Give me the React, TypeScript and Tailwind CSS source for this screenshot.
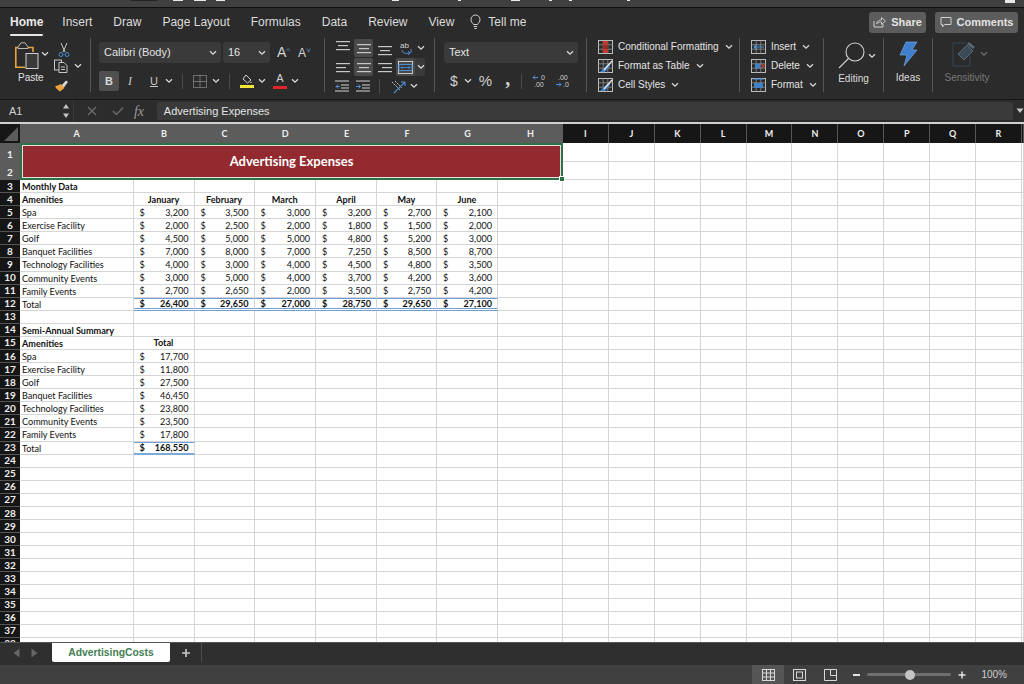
import * as React from "react";

const UI = "font-['Liberation_Sans',Arial,sans-serif]";
const SHEET = "font-['Lato','Noto_Sans',sans-serif]";

const TABS = ["Insert", "Draw", "Page Layout", "Formulas", "Data", "Review", "View"];
const COLS = ["A", "B", "C", "D", "E", "F", "G", "H"];
const DARK_COLS = ["I", "J", "K", "L", "M", "N", "O", "P", "Q", "R", "S"];
const MONTHS = ["January", "February", "March", "April", "May", "June"];

type DataRow = { n: number; label?: string; bold?: boolean; head?: string[]; vals?: string[]; total?: boolean };

const ROWS: DataRow[] = [
  { n: 3, label: "Monthly Data", bold: true },
  { n: 4, label: "Amenities", bold: true, head: MONTHS },
  { n: 5, label: "Spa", vals: ["3,200", "3,500", "3,000", "3,200", "2,700", "2,100"] },
  { n: 6, label: "Exercise Facility", vals: ["2,000", "2,500", "2,000", "1,800", "1,500", "2,000"] },
  { n: 7, label: "Golf", vals: ["4,500", "5,000", "5,000", "4,800", "5,200", "3,000"] },
  { n: 8, label: "Banquet Facilities", vals: ["7,000", "8,000", "7,000", "7,250", "8,500", "8,700"] },
  { n: 9, label: "Technology Facilities", vals: ["4,000", "3,000", "4,000", "4,500", "4,800", "3,500"] },
  { n: 10, label: "Community Events", vals: ["3,000", "5,000", "4,000", "3,700", "4,200", "3,600"] },
  { n: 11, label: "Family Events", vals: ["2,700", "2,650", "2,000", "3,500", "2,750", "4,200"] },
  { n: 12, label: "Total", vals: ["26,400", "29,650", "27,000", "28,750", "29,650", "27,100"], total: true },
  { n: 13 },
  { n: 14, label: "Semi-Annual Summary", bold: true },
  { n: 15, label: "Amenities", bold: true, head: ["Total"] },
  { n: 16, label: "Spa", vals: ["17,700"] },
  { n: 17, label: "Exercise Facility", vals: ["11,800"] },
  { n: 18, label: "Golf", vals: ["27,500"] },
  { n: 19, label: "Banquet Facilities", vals: ["46,450"] },
  { n: 20, label: "Technology Facilities", vals: ["23,800"] },
  { n: 21, label: "Community Events", vals: ["23,500"] },
  { n: 22, label: "Family Events", vals: ["17,800"] },
  { n: 23, label: "Total", vals: ["168,550"], total: true },
  ...Array.from({ length: 15 }, (_, i) => ({ n: 24 + i })),
];

function Chev({ className = "" }: { className?: string }) {
  return (
    <svg width="8" height="6" viewBox="0 0 8 6" fill="none" className={`shrink-0 ${className}`}>
      <path d="M1 1.2 4 4.2 7 1.2" stroke="#d8d8d8" strokeWidth="1.3" />
    </svg>
  );
}

function Ico({ w = 16, h = 16, children }: { w?: number; h?: number; children: React.ReactNode }) {
  return (
    <svg width={w} height={h} viewBox={`0 0 ${w} ${h}`} fill="none" className="shrink-0">
      {children}
    </svg>
  );
}

function Lines({ align, valign = "c", active }: { align: "l" | "c" | "r"; valign?: "t" | "c" | "b"; active?: boolean }) {
  const x = (len: number) => (align === "l" ? 1 : align === "c" ? (14 - len) / 2 + 1 : 15 - len);
  const rows = [
    [12, 1],
    [8, 5],
    [12, 9],
  ];
  const v = valign === "t" ? "items-start pt-[1px]" : valign === "b" ? "items-end pb-[1px]" : "items-center";
  return (
    <div className={`flex h-[18px] w-[19px] justify-center rounded-[2px] ${v} ${active ? "bg-[#4a4a4a]" : ""}`}>
      <Ico w={16} h={11}>
        {rows.map(([len, y]) => (
          <rect key={y} x={x(len + 2)} y={y} width={len + 2} height="1.2" fill="#c8c8c8" />
        ))}
      </Ico>
    </div>
  );
}

function GridIcon({ children }: { children: React.ReactNode }) {
  return (
    <Ico w={15} h={14}>
      <rect x="0.5" y="0.5" width="14" height="13" stroke="#bdbdbd" />
      <path d="M5.2 0.5v13M9.8 0.5v13M0.5 4.8h14M0.5 9.2h14" stroke="#8f8f8f" strokeWidth="0.8" />
      {children}
    </Ico>
  );
}

function StyleRow({ icon, label }: { icon: React.ReactNode; label: string }) {
  return (
    <div className="flex h-[19px] shrink-0 items-center gap-[5px]">
      {icon}
      <span className="text-[10px] text-[#e4e4e4]">{label}</span>
      <Chev className="ml-[1px]" />
    </div>
  );
}

const brush = (
  <>
    <path d="M2 13 9 6l3-2v3l-5 6z" fill="#3f82c8" />
    <path d="M14 2 6 11" stroke="#e8e8e8" strokeWidth="1.3" />
  </>
);

function RibbonTabs() {
  return (
    <div className="flex h-[27px] items-center pl-[10px] pr-[6px] pt-[1px]">
      <div className="relative text-[12px] font-bold text-[#e9e9e9]">
        Home
        <div className="absolute -bottom-[5px] left-0 right-0 h-[2px] rounded bg-[#e6e6e6]" />
      </div>
      <div className="ml-[19px] flex items-center gap-[21px] text-[12px] text-[#dcdcdc]">
        {TABS.map((t) => (
          <span key={t}>{t}</span>
        ))}
      </div>
      <div className="ml-[16px] flex items-center gap-[7px] text-[12px] text-[#dcdcdc]">
        <Ico w={11} h={16}>
          <path d="M3.5 10.5C2.5 9 1 8 1 5.5a4.5 4.5 0 0 1 9 0c0 2.500-1.500 3.500-2.500 5z" stroke="#d4d4d4" />
          <path d="M3.800 12.500h3.400M4.300 14.500h2.400" stroke="#d4d4d4" />
        </Ico>
        <span>Tell me</span>
      </div>
      <div className="ml-auto flex gap-[9px] text-[11px] font-bold text-[#e2e2e2]">
        <div className="flex h-[21px] w-[57px] items-center justify-center gap-[5px] rounded-[3px] bg-[#5c5c5c]">
          <Ico w={13} h={12}>
            <path d="M1 5v6h9V8" stroke="#cfcfcf" />
            <path d="M3.500 8C4 5 6 4 8.500 4V1.500L12.500 5 8.500 8.500V6C6.500 6 5 6.500 3.500 8z" stroke="#cfcfcf" strokeWidth="0.9" />
          </Ico>
          Share
        </div>
        <div className="flex h-[21px] w-[83px] items-center justify-center gap-[5px] rounded-[3px] bg-[#5c5c5c]">
          <Ico w={12} h={12}>
            <path d="M1 1.500h10v7H4.500L2.500 11V8.500H1z" stroke="#cfcfcf" />
          </Ico>
          Comments
        </div>
      </div>
    </div>
  );
}

function PasteGroup() {
  return (
    <div className="flex h-[54px] w-[91px] shrink-0 border-r border-[#555] pl-[15px] pt-[4px]">
      <div className="flex w-[39px] flex-col items-start">
        <div className="flex items-start">
          <Ico w={24} h={27}>
            <path d="M3 5.500H0.800v19.700H10M13 5.500h5V10" stroke="#e8a33d" strokeWidth="1.600" />
            <path d="M3 5 6 0.800h4L13 5v1.500H3z" stroke="#b8b8b8" fill="#2b2b2b" />
            <rect x="11" y="11.500" width="12" height="15" fill="#3a3a3a" stroke="#d0d0d0" />
          </Ico>
          <Chev className="ml-[2px] mt-[9px]" />
        </div>
        <span className="ml-[3px] mt-[1px] text-[10px] text-[#e0e0e0]">Paste</span>
      </div>
      <div className="flex flex-col">
        <div className="pl-[4px]">
          <Ico w={12} h={15}>
            <path d="M3 1l4 9M9 1 5 10" stroke="#c8c8c8" />
            <circle cx="3" cy="12.500" r="2" stroke="#4b8fd6" />
            <circle cx="9" cy="12.500" r="2" stroke="#4b8fd6" />
          </Ico>
        </div>
        <div className="mt-[2px] flex items-center gap-[5px]">
          <Ico w={15} h={14}>
            <rect x="0.500" y="1" width="7" height="10" stroke="#c8c8c8" />
            <path d="M5 3.500h5l3 3v7H5z" fill="#2b2b2b" stroke="#c8c8c8" />
            <path d="M7 8h4M7 10.500h4" stroke="#c8c8c8" />
          </Ico>
          <Chev />
        </div>
        <div className="mt-[5px]">
          <Ico w={15} h={14}>
            <path d="M7 8 12 2.500l2 1.500-4.500 6z" fill="#d8d8d8" />
            <path d="M1 8.500 7 6l3.500 4-4.500 3.500c-1.500-1-3-2-5-5z" fill="#e8a33d" />
          </Ico>
        </div>
      </div>
    </div>
  );
}

function FontGroup() {
  return (
    <div className="flex h-[54px] w-[234px] shrink-0 flex-col border-r border-[#555] pl-[8px] pt-[4px]">
      <div className="flex h-[21px] items-center">
        <div className="flex h-[21px] w-[122px] items-center justify-between rounded-[3px] bg-[#3a3a3a] pl-[5px] pr-[4px] text-[11px] text-[#e4e4e4]">
          Calibri (Body)
          <Chev />
        </div>
        <div className="ml-[2px] flex h-[21px] w-[47px] items-center justify-between rounded-[3px] bg-[#3a3a3a] pl-[5px] pr-[4px] text-[11px] text-[#e4e4e4]">
          16
          <Chev />
        </div>
        <span className="ml-[7px] text-[14px] text-[#d4d4d4]">
          A<sup className="text-[8px] text-[#5d9ad6]">^</sup>
        </span>
        <span className="ml-[8px] text-[12px] text-[#d4d4d4]">
          A<sup className="text-[8px] text-[#5d9ad6]">˅</sup>
        </span>
      </div>
      <div className="mt-[8px] flex h-[20px] items-center">
        <div className="flex h-[20px] w-[20px] items-center justify-center rounded-[2px] bg-[#4f4f4f] text-[11px] font-bold text-[#d8d8d8]">
          B
        </div>
        <span className="ml-[9px] font-['Liberation_Serif',serif] text-[12px] italic text-[#c8c8c8]">I</span>
        <span className="ml-[18px] text-[11px] text-[#c8c8c8] underline">U</span>
        <Chev className="ml-[7px]" />
        <div className="ml-[9px] h-[15px] w-px bg-[#4a4a4a]" />
        <div className="ml-[10px]">
          <Ico w={14} h={13}>
            <rect x="0.500" y="0.500" width="13" height="12" stroke="#b0b0b0" strokeDasharray="1 1" />
            <path d="M7 0.500v12M0.500 6.500h13" stroke="#b0b0b0" strokeDasharray="1 1" />
          </Ico>
        </div>
        <Chev className="ml-[5px]" />
        <div className="ml-[9px] h-[15px] w-px bg-[#4a4a4a]" />
        <div className="ml-[10px] flex w-[14px] flex-col items-center">
          <Ico w={12} h={10}>
            <path d="M5 1 10 6 6.500 9 2 5z" stroke="#d4d4d4" />
            <path d="M10 7.500l1 1.500-2 0z" fill="#d4d4d4" />
          </Ico>
          <div className="mt-px h-[3px] w-[14px] bg-[#f2e63c]" />
        </div>
        <Chev className="ml-[4px]" />
        <div className="ml-[7px] flex w-[14px] flex-col items-center">
          <span className="h-[11px] text-[11px] leading-[11px] text-[#d4d4d4]">A</span>
          <div className="mt-[2px] h-[3px] w-[14px] bg-[#e0262a]" />
        </div>
        <Chev className="ml-[4px]" />
      </div>
    </div>
  );
}

function AlignGroup() {
  return (
    <div className="flex h-[54px] w-[110px] shrink-0 items-start border-r border-[#555] pl-[8px] pt-[1px]">
      <div className="grid grid-cols-[19px_19px_19px] gap-x-[2px] gap-y-[1px]">
        <Lines align="c" valign="t" />
        <Lines align="c" active />
        <Lines align="c" valign="b" />
        <Lines align="l" />
        <Lines align="c" active />
        <Lines align="r" />
        <div className="flex h-[18px] items-center justify-center">
          <Ico w={15} h={12}>
            <path d="M0 1h14M6 5h8M6 8h8M0 11h14" stroke="#d4d4d4" />
            <path d="M5 6.500H1m0 0 2-2m-2 2 2 2" stroke="#4b8fd6" />
          </Ico>
        </div>
        <div className="flex h-[18px] items-center justify-center">
          <Ico w={15} h={12}>
            <path d="M0 1h14M6 5h8M6 8h8M0 11h14" stroke="#d4d4d4" />
            <path d="M0 6.500h4.500m0 0-2-2m2 2-2 2" stroke="#4b8fd6" />
          </Ico>
        </div>
        <div className="flex h-[18px] items-center pl-[4px]">
          <div className="h-[15px] w-px bg-[#4a4a4a]" />
        </div>
      </div>
      <div className="ml-[2px] flex flex-col gap-[1px]">
        <div className="flex h-[18px] items-center gap-[4px] pl-[3px]">
          <Ico w={14} h={15}>
            <text x="1" y="7" fontSize="8" fill="#d4d4d4" fontFamily="Liberation Sans">ab</text>
            <path d="M3 9c0 3 3 4 8 3m0 0-2-2m2 2-2 2M12 8v4" stroke="#4b8fd6" />
          </Ico>
          <Chev />
        </div>
        <div className="flex h-[18px] w-[29px] items-center gap-[2px] rounded-[2px] bg-[#3a3a3a]">
          <div className="flex h-[18px] w-[19px] items-center justify-center rounded-[2px] bg-[#4a4a4a]">
            <Ico w={15} h={13}>
              <rect x="0.500" y="0.500" width="14" height="12" stroke="#c8c8c8" />
              <rect x="1" y="3.500" width="13" height="6" fill="#3a3a3a" stroke="#4b8fd6" />
              <path d="M3 6.500h9M3 6.500l1.500-1.500M3 6.500 4.500 8M12 6.500 10.500 5M12 6.500 10.500 8" stroke="#4b8fd6" strokeWidth="0.800" />
            </Ico>
          </div>
          <Chev />
        </div>
        <div className="-ml-[6px] flex h-[18px] items-center gap-[2px]">
          <Ico w={18} h={15}>
            <path d="M2 3l8 8M5 2l7 7" stroke="#bdbdbd" strokeDasharray="2 1" />
            <path d="M4 14 15 3m0 0h-4m4 0v4" stroke="#4b8fd6" strokeWidth="1.100" />
          </Ico>
          <Chev />
        </div>
      </div>
    </div>
  );
}

function NumberGroup() {
  return (
    <div className="flex h-[54px] w-[152px] shrink-0 flex-col border-r border-[#555] pl-[9px] pt-[4px]">
      <div className="flex h-[21px] w-[134px] items-center justify-between rounded-[3px] bg-[#3a3a3a] pl-[5px] pr-[4px] text-[11px] text-[#e4e4e4]">
        Text
        <Chev />
      </div>
      <div className="mt-[8px] flex h-[20px] items-center text-[#d0d0d0]">
        <span className="ml-[6px] text-[14px]">$</span>
        <Chev className="ml-[6px]" />
        <span className="ml-[7px] text-[15px]">%</span>
        <span className="mb-[7px] ml-[13px] font-['Liberation_Serif',serif] text-[20px] font-bold leading-[14px]">,</span>
        <div className="ml-[11px] h-[15px] w-px bg-[#4a4a4a]" />
        <div className="ml-[10px]">
          <Ico w={15} h={14}>
            <path d="M6 3.500H1m0 0 2-2m-2 2 2 2" stroke="#4b8fd6" />
            <text x="9" y="6" fontSize="7" fill="#d0d0d0" fontFamily="Liberation Sans">0</text>
            <text x="2" y="13" fontSize="7" fill="#d0d0d0" fontFamily="Liberation Sans">.00</text>
          </Ico>
        </div>
        <div className="ml-[8px]">
          <Ico w={15} h={14}>
            <text x="3" y="6" fontSize="7" fill="#d0d0d0" fontFamily="Liberation Sans">.00</text>
            <path d="M1 10.500h5m0 0-2-2m2 2-2 2" stroke="#4b8fd6" />
            <text x="8" y="13" fontSize="7" fill="#d0d0d0" fontFamily="Liberation Sans">.0</text>
          </Ico>
        </div>
      </div>
    </div>
  );
}

function StylesGroup() {
  return (
    <div className="flex h-[54px] w-[153px] shrink-0 flex-col justify-center border-r border-[#555] pl-[11px] pt-[1px]">
      <StyleRow
        label="Conditional Formatting"
        icon={
          <GridIcon>
            <rect x="5" y="1" width="5" height="4" fill="#c0392f" />
            <rect x="5" y="5" width="5" height="4" fill="#8f2f2a" />
            <rect x="5" y="9" width="5" height="4" fill="#c0392f" />
          </GridIcon>
        }
      />
      <StyleRow label="Format as Table" icon={<GridIcon>{brush}</GridIcon>} />
      <StyleRow label="Cell Styles" icon={<GridIcon>{brush}</GridIcon>} />
    </div>
  );
}

function CellsGroup() {
  return (
    <div className="flex h-[54px] w-[84px] shrink-0 flex-col justify-center border-r border-[#555] pl-[11px] pt-[1px]">
      <StyleRow
        label="Insert"
        icon={
          <GridIcon>
            <path d="M13 7H3m0 0 3-2.500M3 7l3 2.500" stroke="#4b8fd6" strokeWidth="1.200" />
          </GridIcon>
        }
      />
      <StyleRow
        label="Delete"
        icon={
          <GridIcon>
            <rect x="4" y="4.500" width="5" height="5" fill="#3f82c8" />
            <path d="M10.500 5 14 9M14 5l-3.500 4" stroke="#e0443c" />
          </GridIcon>
        }
      />
      <StyleRow
        label="Format"
        icon={
          <GridIcon>
            <rect x="3" y="5" width="9" height="5" fill="#3f82c8" />
            <path d="M2 1h11" stroke="#4b8fd6" strokeWidth="1.200" />
          </GridIcon>
        }
      />
    </div>
  );
}

function BigButtons() {
  return (
    <>
      <div className="flex h-[54px] w-[60px] shrink-0 flex-col items-center border-r border-[#555] pt-[4px]">
        <div className="ml-[7px] flex items-center gap-[3px]">
          <Ico w={27} h={27}>
            <circle cx="17" cy="10" r="9" stroke="#d0d0d0" strokeWidth="1.100" />
            <path d="M10.500 16.500 1 26" stroke="#d0d0d0" strokeWidth="1.100" />
          </Ico>
          <Chev />
        </div>
        <span className="mt-[2px] text-[10px] text-[#dcdcdc]">Editing</span>
      </div>
      <div className="flex h-[54px] w-[49px] shrink-0 flex-col items-center border-r border-[#555] pt-[3px]">
        <Ico w={19} h={26}>
          <path d="M7 1h11l-5 8h5L5 25l3-11H1z" fill="#3f7fcb" stroke="#6ea6e3" strokeWidth="0.700" />
        </Ico>
        <span className="mt-[3px] text-[10px] text-[#dcdcdc]">Ideas</span>
      </div>
      <div className="flex h-[54px] w-[68px] shrink-0 flex-col items-center pt-[3px]">
        <div className="ml-[6px] flex items-center gap-[4px]">
          <Ico w={24} h={26}>
            <path d="M1 2h13M1 2v23h17V15" stroke="#35495c" />
            <path d="M6 13 15 4l6 6-9 9z" stroke="#566978" fill="#3c4a55" />
            <path d="M17 1l6 5-2 2-6-5z" fill="#566978" />
          </Ico>
          <Chev className="opacity-40" />
        </div>
        <span className="mt-[3px] text-[10px] text-[#777]">Sensitivity</span>
      </div>
    </>
  );
}

function FormulaBar() {
  return (
    <div className="flex h-[23px] shrink-0 items-center border-t border-[#161616] bg-[#2c2c2c] text-[11px]">
      <span className="w-[62px] pl-[9px] text-[#d4d4d4]">A1</span>
      <Ico w={8} h={16}>
        <path d="M4 1 7 5.500H1zM4 15 1 10.500h6z" fill="#c4c4c4" />
      </Ico>
      <div className="ml-[3px] h-[22px] w-px bg-[#383838]" />
      <div className="ml-[13px]">
        <Ico w={10} h={10}>
          <path d="M1 1l8 8M9 1 1 9" stroke="#6a6a6a" strokeWidth="1.500" />
        </Ico>
      </div>
      <div className="ml-[15px]">
        <Ico w={12} h={10}>
          <path d="M1 5l3.500 3.500L11 1.500" stroke="#6a6a6a" strokeWidth="1.500" />
        </Ico>
      </div>
      <span className="ml-[10px] w-[20px] font-['Liberation_Serif',serif] text-[14px] italic text-[#9a9a9a]">fx</span>
      <div className="ml-[3px] flex h-[18px] w-[858px] items-center rounded-[2px] bg-[#3a3a3a] pl-[7px] text-[11px] text-[#e4e4e4]">
        Advertising Expenses
      </div>
      <div className="ml-[3px]">
        <Ico w={8} h={6}>
          <path d="M0.500 0.500h7L4 5z" fill="#c4c4c4" />
        </Ico>
      </div>
    </div>
  );
}

function EmptyCell() {
  return <div className="border-b border-r border-[#d6d6d6] bg-white" />;
}

function SheetRow({ row }: { row: DataRow }) {
  const cells = [0, 1, 2, 3, 4, 5];
  const blueTop = "border-t border-t-[#6f9fd4]";
  const blueBottom = row.n === 12 ? "border-b-[3px] border-double border-b-[#6f9fd4]" : "border-b-2 border-b-[#7da9d8]";
  return (
    <>
      <div className="flex items-center justify-center border-b border-[#555] bg-[#161616] text-[10px] font-bold text-[#efefef]">
        {row.n}
      </div>
      <div
        className={`whitespace-nowrap border-b border-r border-[#d6d6d6] pl-[2px] text-[9.1px] leading-[13px] text-[#111] ${
          row.bold ? "font-bold" : ""
        }`}
      >
        {row.label}
      </div>
      {cells.map((i) => {
        const val = row.vals?.[i];
        const head = row.head?.[i];
        if (head) {
          return (
            <div
              key={i}
              className="flex items-center justify-center border-b border-r border-[#d6d6d6] text-[9.1px] font-bold leading-[11px] text-[#111]"
            >
              {head}
            </div>
          );
        }
        if (!val) return <EmptyCell key={i} />;
        return (
          <div
            key={i}
            className={`flex items-center justify-between border-b border-r border-[#d6d6d6] pl-[6px] pr-[5px] text-[9.1px] leading-[11px] text-[#111] ${
              row.total ? `font-bold ${blueTop} ${blueBottom}` : ""
            }`}
          >
            <span>$</span>
            <span>{val}</span>
          </div>
        );
      })}
      <EmptyCell />
      {DARK_COLS.map((c) => (
        <EmptyCell key={c} />
      ))}
    </>
  );
}

function Sheet() {
  return (
    <div className={`relative min-h-0 flex-1 overflow-hidden bg-white ${SHEET}`}>
      <div className="grid auto-rows-[13.09px] grid-cols-[20px_113.5px_61px_60px_61.5px_61px_60px_61px_65px_45.9px_45.9px_45.9px_45.9px_45.9px_45.9px_45.9px_45.9px_45.9px_45.9px_1fr] grid-rows-[19px_18.5px_18.5px]">
        <div className="bg-[#161616]">
          <svg width="20" height="19" viewBox="0 0 20 19">
            <path d="M18 3v14H4z" fill="#5c5c5c" />
          </svg>
        </div>
        {COLS.map((c) => (
          <div key={c} className="flex items-center justify-center bg-[#5c5c5c] text-[9px] font-bold text-[#efefef]">
            {c}
          </div>
        ))}
        {DARK_COLS.map((c) => (
          <div
            key={c}
            className="flex items-center justify-center border-r border-[#555] bg-[#161616] text-[9px] font-bold text-[#efefef]"
          >
            {c === "S" ? "" : c}
          </div>
        ))}

        <div className="flex items-center justify-center bg-[#5c5c5c] pt-[5px] text-[10px] font-bold text-[#efefef]">1</div>
        <div className="relative col-span-8 row-span-2 border-2 border-[#2f7046] bg-[#2f7046]">
          <div className="flex h-full items-center justify-center border border-[#e2e2e2] bg-[#932a2f] text-[13px] font-bold text-white">
            Advertising Expenses
          </div>
          <div className="absolute -bottom-[4px] -right-[4px] h-[6px] w-[6px] border border-white bg-[#2f7046]" />
        </div>
        {DARK_COLS.map((c) => (
          <EmptyCell key={c} />
        ))}
        <div className="flex items-center justify-center bg-[#5c5c5c] pt-[4px] text-[10px] font-bold text-[#efefef]">2</div>
        {DARK_COLS.map((c) => (
          <EmptyCell key={c} />
        ))}

        {ROWS.map((r) => (
          <SheetRow key={r.n} row={r} />
        ))}
      </div>
    </div>
  );
}

function TabBar() {
  return (
    <div className="flex h-[23px] shrink-0 border-t border-[#555] bg-[#2f2f2f]">
      <div className="flex w-[52px] items-center gap-[11px] pb-[3px] pl-[13px]">
        <Ico w={7} h={10}>
          <path d="M6.500 0.500v9L0.500 5z" fill="#666" />
        </Ico>
        <Ico w={7} h={10}>
          <path d="M0.500 0.500v9L6.500 5z" fill="#666" />
        </Ico>
      </div>
      <div className="flex h-[19px] w-[118px] items-center justify-center rounded-b-[2px] bg-white text-[10.3px] font-bold text-[#3f8054]">
        AdvertisingCosts
      </div>
      <div className="ml-[11px] flex h-[19px] w-[21px] items-center border-r border-[#4d4d4d]">
        <Ico w={10} h={10}>
          <path d="M5 1v8M1 5h8" stroke="#c8c8c8" strokeWidth="1.600" />
        </Ico>
      </div>
    </div>
  );
}

function StatusBar() {
  return (
    <div className="flex h-[19px] shrink-0 items-center justify-end bg-[#404040] pr-[17px]">
      <div className="flex h-[19px] w-[32px] items-center justify-center bg-[#555]">
        <Ico w={13} h={12}>
          <rect x="0.500" y="0.500" width="12" height="11" stroke="#d8d8d8" />
          <path d="M4.500 0.500v11M8.500 0.500v11M0.500 4h12M0.500 8h12" stroke="#d8d8d8" />
        </Ico>
      </div>
      <div className="ml-[9px]">
        <Ico w={13} h={12}>
          <rect x="0.500" y="0.500" width="12" height="11" stroke="#d8d8d8" />
          <rect x="3.500" y="3" width="6" height="6" stroke="#d8d8d8" />
        </Ico>
      </div>
      <div className="ml-[18px]">
        <Ico w={13} h={12}>
          <path d="M0.500 0.500h12v11H0.500zM6.500 0.500v6h6" stroke="#d8d8d8" />
        </Ico>
      </div>
      <div className="ml-[16px] h-[2px] w-[7px] bg-[#e4e4e4]" />
      <div className="relative ml-[7px] h-[3px] w-[84px] rounded bg-[#6f6f6f]">
        <div className="absolute -top-[3.500px] left-[38px] h-[10px] w-[10px] rounded-full bg-[#c4c4c4]" />
      </div>
      <div className="ml-[7px]">
        <Ico w={8} h={8}>
          <path d="M4 0.500v7M0.500 4h7" stroke="#e4e4e4" strokeWidth="1.500" />
        </Ico>
      </div>
      <span className="ml-[15px] text-[10px] text-[#cfcfcf]">100%</span>
    </div>
  );
}

export default function App() {
  return (
    <div className={`flex h-[684px] w-[1024px] flex-col overflow-hidden bg-[#2b2b2b] ${UI}`}>
      <div className="h-[8px] shrink-0 border-b border-[#111] bg-[#404040]">
        <svg width="1024" height="7" viewBox="0 0 1024 7">
          <path d="M131 0h26v1h-26z" fill="#222" />
          <path d="M173 0h10v1h-10zM194 0h12v1h-12zM216 0h9v1h-9zM392 0h7v1h-7zM458 0h3v1h-3zM511 0h9v1h-9zM549 0h3v1h-3zM569 0h3v1h-3zM627 0h3v1h-3zM1005 0h10v3h-10z" fill="#e8e8e8" />
        </svg>
      </div>
      <RibbonTabs />
      <div className="flex h-[64px] shrink-0 pt-[3px]">
        <PasteGroup />
        <FontGroup />
        <AlignGroup />
        <NumberGroup />
        <StylesGroup />
        <CellsGroup />
        <BigButtons />
      </div>
      <FormulaBar />
      <div className="h-[2px] shrink-0 bg-[#d0d0d0]" />
      <Sheet />
      <TabBar />
      <StatusBar />
    </div>
  );
}
